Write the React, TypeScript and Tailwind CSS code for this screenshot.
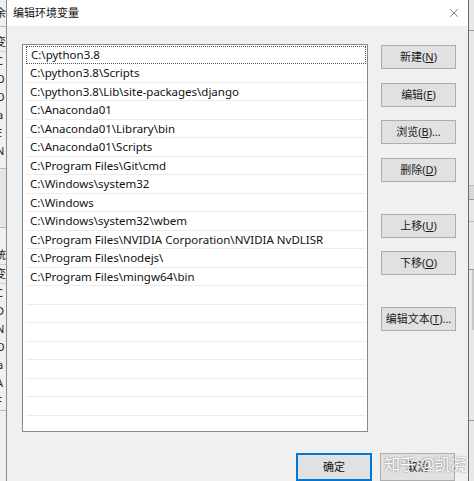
import { X } from 'lucide-react';

const paths = [
  'C:\\python3.8',
  'C:\\python3.8\\Scripts',
  'C:\\python3.8\\Lib\\site-packages\\django',
  'C:\\Anaconda01',
  'C:\\Anaconda01\\Library\\bin',
  'C:\\Anaconda01\\Scripts',
  'C:\\Program Files\\Git\\cmd',
  'C:\\Windows\\system32',
  'C:\\Windows',
  'C:\\Windows\\system32\\wbem',
  'C:\\Program Files\\NVIDIA Corporation\\NVIDIA NvDLISR',
  'C:\\Program Files\\nodejs\\',
  'C:\\Program Files\\mingw64\\bin',
];

const rows = [...paths, ...Array(9).fill('')];

const font = { fontFamily: '"Noto Sans", "Noto Sans CJK SC", sans-serif' };

function Btn({ label, hot, tail, className = '' }: { label: string; hot: string; tail?: string; className?: string }) {
  return (
    <button
      className={`w-[75px] h-[24px] bg-[#e1e1e1] border border-[#adadad] text-[11px] text-[#1a1a1a] flex items-center justify-center ${className}`}
    >
      {label}(<span className="underline">{hot}</span>){tail}
    </button>
  );
}

export default function App() {
  return (
    <div className="w-[474px] h-[481px] overflow-hidden flex bg-[#f0f0f0]" style={font}>
      {/* window behind, left edge */}
      <div className="w-[7px] border-r border-[#8a8a8a] bg-[#f0f0f0] overflow-hidden text-[11px] leading-[18px] text-[#222] flex flex-col">
        <div className="h-[27px] pt-[4px] -ml-[5px] border-b border-[#bbb]">余</div>
        <div className="-ml-[5px] pt-[6px] border-b border-[#ccc]">变</div>
        <div className="-ml-[4px]">C</div>
        <div className="-ml-[4px]">O</div>
        <div className="-ml-[4px]">O</div>
        <div className="-ml-[3px]">a</div>
        <div className="-ml-[4px]">E</div>
        <div className="-ml-[4px]">N</div>
        <div className="h-[60px] mt-[8px] bg-[#e6e6e6] border-y border-[#bbb]" />
        <div className="-ml-[5px] mt-[18px] border-b border-[#ccc]">统</div>
        <div className="-ml-[5px] border-b border-[#ccc]">变</div>
        <div className="-ml-[4px]">C</div>
        <div className="-ml-[4px]">D</div>
        <div className="-ml-[4px]">N</div>
        <div className="-ml-[4px]">O</div>
        <div className="-ml-[3px]">a</div>
        <div className="-ml-[4px]">A</div>
        <div className="-ml-[4px] border-b border-[#bbb]">F</div>
      </div>

      {/* dialog */}
      <div className="w-[461px] flex flex-col">
        <div className="h-[27px] bg-white flex items-center justify-between pl-[6px] pr-[7px]">
          <span className="text-[11px] text-[#111]">编辑环境变量</span>
          <X size={14} strokeWidth={1} className="text-[#222]" />
        </div>

        <div className="flex-1 flex flex-col pt-[18px] pl-[15px]">
          <div className="flex gap-[13px]">
            <div className="w-[346px] h-[388px] bg-white border border-[#828790] overflow-hidden flex flex-col pl-[3px] pr-[1px] pt-[1px]">
              {rows.map((p, i) => (
                <div
                  key={i}
                  className={`h-[18.5px] shrink-0 flex items-center pl-[4px] text-[11.5px] text-[#111] ${
                    i === 0 ? 'border border-dotted border-[#555]' : 'border-b border-[#ececec]'
                  }`}
                >
                  {p}
                </div>
              ))}
            </div>

            <div className="flex flex-col pt-[1px]">
              <Btn label="新建" hot="N" />
              <Btn label="编辑" hot="E" className="mt-[14px]" />
              <Btn label="浏览" hot="B" tail="..." className="mt-[13px]" />
              <Btn label="删除" hot="D" className="mt-[14px]" />
              <Btn label="上移" hot="U" className="mt-[32px]" />
              <Btn label="下移" hot="O" className="mt-[13px]" />
              <Btn label="编辑文本" hot="T" tail="..." className="mt-[32px]" />
            </div>
          </div>

          <div className="flex justify-end gap-[8px] mt-[21px] pr-[13px]">
            <button className="w-[76px] h-[28px] bg-[#e1e1e1] border-2 border-[#0078d7] text-[11px] text-[#111]">
              确定
            </button>
            <div className="relative">
              <button className="w-[75px] h-[28px] bg-[#e1e1e1] border border-[#adadad] text-[11px] text-[#111]">
                取消
              </button>
              <span className="absolute left-[4px] -top-[1px] text-[16px] text-white whitespace-nowrap [text-shadow:0_0_2px_#666]">
                知乎 @凯凝
              </span>
            </div>
          </div>
        </div>
      </div>

      {/* window behind, right edge */}
      <div className="w-[6px] border-l border-[#6b6b6b] bg-[#e8e8e8] flex flex-col">
        <div className="h-[31px] border-b border-[#999]" />
        <div className="h-[155px] border-b border-[#bbb]" />
        <div className="h-[14px] bg-[#d8d8d8] border-b border-[#999]" />
        <div className="h-[22px] border-b border-[#bbb]" />
        <div className="h-[48px] border-b border-[#999]" />
        <div className="h-[60px] ml-[3px] bg-[#c8c8c8]" />
        <div className="flex-1" />
        <div className="h-[1px] bg-[#999] mb-[60px]" />
      </div>
    </div>
  );
}
